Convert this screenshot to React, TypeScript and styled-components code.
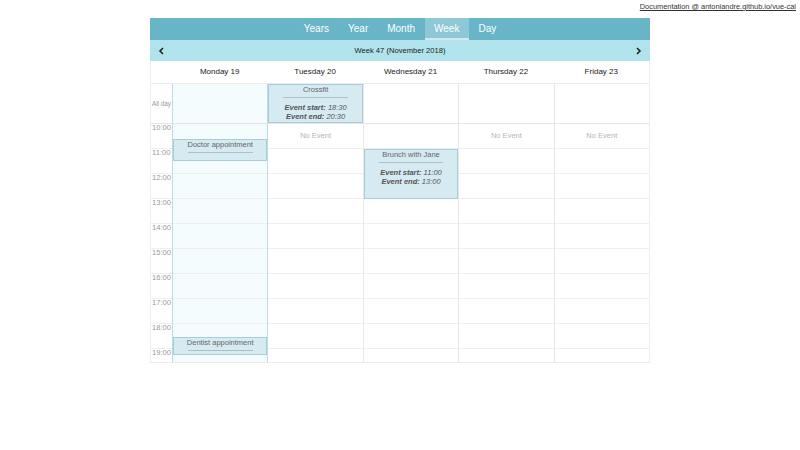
import React from 'react';
import styled, { createGlobalStyle } from 'styled-components';

const GlobalStyle = createGlobalStyle`
  html, body {
    margin: 0;
    padding: 0;
    background: #fff;
  }
  body {
    font-family: 'Liberation Sans', Arial, sans-serif;
    color: #333;
  }
`;

const HOUR = 25;
const FROM = 10;
const HOURS = [10, 11, 12, 13, 14, 15, 16, 17, 18, 19, 20];

type CalEvent = {
	title: string;
	start: string;
	end: string;
};

type Day = {
	label: string;
	selected?: boolean;
	allDay?: CalEvent;
	events: CalEvent[];
};

const days: Day[] = [
	{
		label: 'Monday 19',
		selected: true,
		events: [
			{ title: 'Doctor appointment', start: '10:35', end: '11:30' },
			{ title: 'Dentist appointment', start: '18:30', end: '19:15' },
		],
	},
	{
		label: 'Tuesday 20',
		allDay: { title: 'Crossfit', start: '18:30', end: '20:30' },
		events: [],
	},
	{
		label: 'Wednesday 21',
		events: [
			{ title: 'Brunch with Jane', start: '11:00', end: '13:00' },
			{ title: 'Swimming class', start: '19:30', end: '21:00' },
		],
	},
	{ label: 'Thursday 22', events: [] },
	{ label: 'Friday 23', events: [] },
];

const toHours = (t: string) => {
	const [h, m] = t.split(':').map(Number);
	return h + m / 60;
};

const Page = styled.div`
	display: flex;
	flex-direction: column;
	align-items: center;
`;

const DocLink = styled.a`
	align-self: flex-end;
	height: 18px;
	line-height: 14px;
	padding-right: 4px;
	font-size: 7.4px;
	color: #333;
	text-decoration: underline;
`;

const Calendar = styled.div`
	width: 500px;
	height: 345px;
	display: flex;
	flex-direction: column;
	overflow: hidden;
`;

const Menu = styled.nav`
	height: 22px;
	display: flex;
	justify-content: center;
	background: #68b5c7;
`;

const Tab = styled.div<{ $active?: boolean }>`
	padding: 0 9.5px;
	line-height: 21px;
	font-size: 10px;
	color: #fff;
	background: ${(p) => (p.$active ? 'rgba(255,255,255,0.25)' : 'transparent')};
	border-bottom: 2px solid ${(p) => (p.$active ? 'rgba(255,255,255,0.6)' : 'transparent')};
	box-sizing: border-box;
	height: 22px;
`;

const TitleBar = styled.div`
	height: 21px;
	display: flex;
	align-items: center;
	justify-content: space-between;
	background: #b0e3eb;
	font-size: 7.6px;
	color: #222;
	padding: 0 8px;
`;

const Arrow = styled.svg`
	width: 7px;
	height: 8px;
`;

const Content = styled.div`
	flex: 1;
	display: flex;
	flex-direction: column;
	border: 1px solid #ececec;
	border-top: none;
	min-height: 0;
`;

const Row = styled.div<{ $height?: number }>`
	display: grid;
	grid-template-columns: 21px repeat(5, 1fr);
	${(p) => (p.$height ? `height: ${p.$height}px;` : '')}
`;

const Heading = styled.div`
	height: 22px;
	line-height: 22px;
	text-align: center;
	font-size: 8px;
	color: #222;
	border-bottom: 1px solid #ececec;
`;

const AllDayLabel = styled.div`
	display: flex;
	align-items: center;
	font-size: 6.3px;
	color: #999;
	padding-left: 1px;
	border-bottom: 1px solid #e4e4e4;
`;

const AllDayCell = styled.div<{ $selected?: boolean }>`
	position: relative;
	height: 40px;
	box-sizing: border-box;
	border-bottom: 1px solid #e4e4e4;
	border-left: 1px solid ${(p) => (p.$selected ? '#bcdbe3' : '#e8e8e8')};
	background: ${(p) => (p.$selected ? '#f4fcfe' : 'transparent')};
	${(p) => (p.$selected ? 'box-shadow: 1px 0 0 #bcdbe3; z-index: 1;' : '')}
`;

const Body = styled.div`
	flex: 1;
	min-height: 0;
	overflow: hidden;
	display: grid;
	grid-template-columns: 21px repeat(5, 1fr);
	align-items: start;
`;

const TimeColumn = styled.div`
	display: flex;
	flex-direction: column;
`;

const TimeCell = styled.div`
	height: ${HOUR}px;
	box-sizing: border-box;
	border-bottom: 1px solid #efefef;
	font-size: 7.6px;
	line-height: 7px;
	color: #999;
	padding-left: 1px;
`;

const DayColumn = styled.div<{ $selected?: boolean }>`
	position: relative;
	display: flex;
	flex-direction: column;
	border-left: 1px solid ${(p) => (p.$selected ? '#bcdbe3' : '#e8e8e8')};
	background: ${(p) => (p.$selected ? '#f4fcfe' : 'transparent')};
	${(p) => (p.$selected ? 'box-shadow: 1px 0 0 #bcdbe3; z-index: 1;' : '')}
`;

const HourCell = styled.div`
	height: ${HOUR}px;
	box-sizing: border-box;
	border-bottom: 1px solid #efefef;
`;

const NoEvent = styled.div`
	text-align: center;
	font-size: 7.5px;
	line-height: 8px;
	padding-top: 8px;
	color: #b5b5b5;
`;

const EventBox = styled.div`
	position: absolute;
	left: 0;
	right: 0;
	box-sizing: border-box;
	overflow: hidden;
	background: #d5eaf1;
	border: 1px solid #a9ccd7;
	text-align: center;
	color: #555;
	font-size: 7.5px;
`;

const EventTitle = styled.div`
	padding-top: 0;
	line-height: 9px;
	color: #666;
`;

const Rule = styled.hr`
	width: 70%;
	margin: 3px auto 6px;
	border: none;
	border-top: 1px solid rgba(0, 0, 0, 0.18);
	height: 0;
`;

const EventLine = styled.div`
	line-height: 8.5px;
	font-style: italic;
	color: #555;

	strong {
		font-weight: bold;
	}
`;

const EventCard = ({ ev, style }: { ev: CalEvent; style?: React.CSSProperties }) => (
	<EventBox style={style}>
		<EventTitle>{ev.title}</EventTitle>
		<Rule />
		<EventLine>
			<strong>Event start:</strong> {ev.start}
		</EventLine>
		<EventLine>
			<strong>Event end:</strong> {ev.end}
		</EventLine>
	</EventBox>
);

const ChevronLeft = () => (
	<Arrow viewBox='0 0 7 8'>
		<path d='M5 1 L2 4 L5 7' fill='none' stroke='#222' strokeWidth='1.6' />
	</Arrow>
);

const ChevronRight = () => (
	<Arrow viewBox='0 0 7 8'>
		<path d='M2 1 L5 4 L2 7' fill='none' stroke='#222' strokeWidth='1.6' />
	</Arrow>
);

export default function App() {
	const views = ['Years', 'Year', 'Month', 'Week', 'Day'];
	return (
		<Page>
			<GlobalStyle />
			<DocLink href='#'>Documentation @ antoniandre.github.io/vue-cal</DocLink>
			<Calendar>
				<Menu>
					{views.map((v) => (
						<Tab key={v} $active={v === 'Week'}>
							{v}
						</Tab>
					))}
				</Menu>
				<TitleBar>
					<ChevronLeft />
					<span>Week 47 (November 2018)</span>
					<ChevronRight />
				</TitleBar>
				<Content>
					<Row>
						<Heading />
						{days.map((d) => (
							<Heading key={d.label}>{d.label}</Heading>
						))}
					</Row>
					<Row $height={40}>
						<AllDayLabel>All day</AllDayLabel>
						{days.map((d) => (
							<AllDayCell key={d.label} $selected={d.selected}>
								{d.allDay && <EventCard ev={d.allDay} style={{ top: 0, bottom: 0 }} />}
							</AllDayCell>
						))}
					</Row>
					<Body>
						<TimeColumn>
							{HOURS.map((h) => (
								<TimeCell key={h}>{h}:00</TimeCell>
							))}
						</TimeColumn>
						{days.map((d) => (
							<DayColumn key={d.label} $selected={d.selected}>
								{HOURS.map((h, i) => (
									<HourCell key={h}>
										{i === 0 && d.events.length === 0 && <NoEvent>No Event</NoEvent>}
									</HourCell>
								))}
								{d.events.map((ev) => {
									const s = toHours(ev.start);
									const e = toHours(ev.end);
									return (
										<EventCard
											key={ev.title}
											ev={ev}
											style={{ top: (s - FROM) * HOUR, height: (e - s) * HOUR }}
										/>
									);
								})}
							</DayColumn>
						))}
					</Body>
				</Content>
			</Calendar>
		</Page>
	);
}
